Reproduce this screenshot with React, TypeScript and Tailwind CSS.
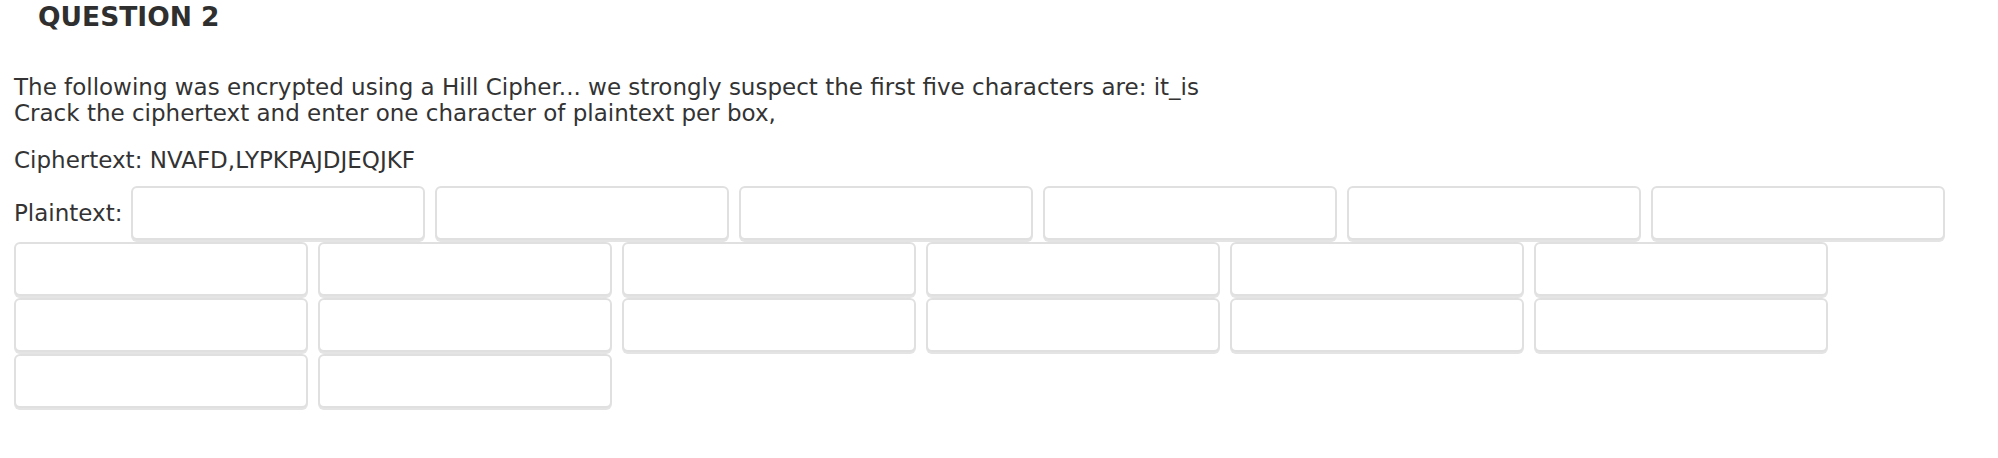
const CIPHERTEXT = 'NVAFD,LYPKPAJDJEQJKF';

function CharBox() {
  return (
    <input
      type="text"
      maxLength={1}
      className="w-[294px] h-[54px] rounded-md border-2 border-[#e0e0e0] bg-white px-2 text-[22px] text-[#333] shadow-[0_2px_0_0_#e4e4e4] outline-none"
    />
  );
}

export default function App() {
  return (
    <div className="min-h-screen bg-white text-[#333] font-['DejaVu_Sans','Liberation_Sans',sans-serif]">
      <h2 className="pl-[38px] pt-[1px] text-[26.5px] leading-[32px] font-bold text-[#2f2f2f]">
        QUESTION 2
      </h2>

      <div className="px-[14px] pt-[41px] text-[23px] leading-[26px]">
        <p>
          The following was encrypted using a Hill Cipher... we strongly suspect the first five characters are: it_is
          <br />
          Crack the ciphertext and enter one character of plaintext per box,
        </p>

        <p className="mt-[21px]">Ciphertext: {CIPHERTEXT}</p>

        <div className="mt-[13px] flex w-[1970px] flex-wrap items-center gap-x-[10px] gap-y-[2px]">
          <span className="w-[107px]">Plaintext:</span>
          {CIPHERTEXT.split('').map((_, i) => (
            <CharBox key={i} />
          ))}
        </div>
      </div>
    </div>
  );
}
